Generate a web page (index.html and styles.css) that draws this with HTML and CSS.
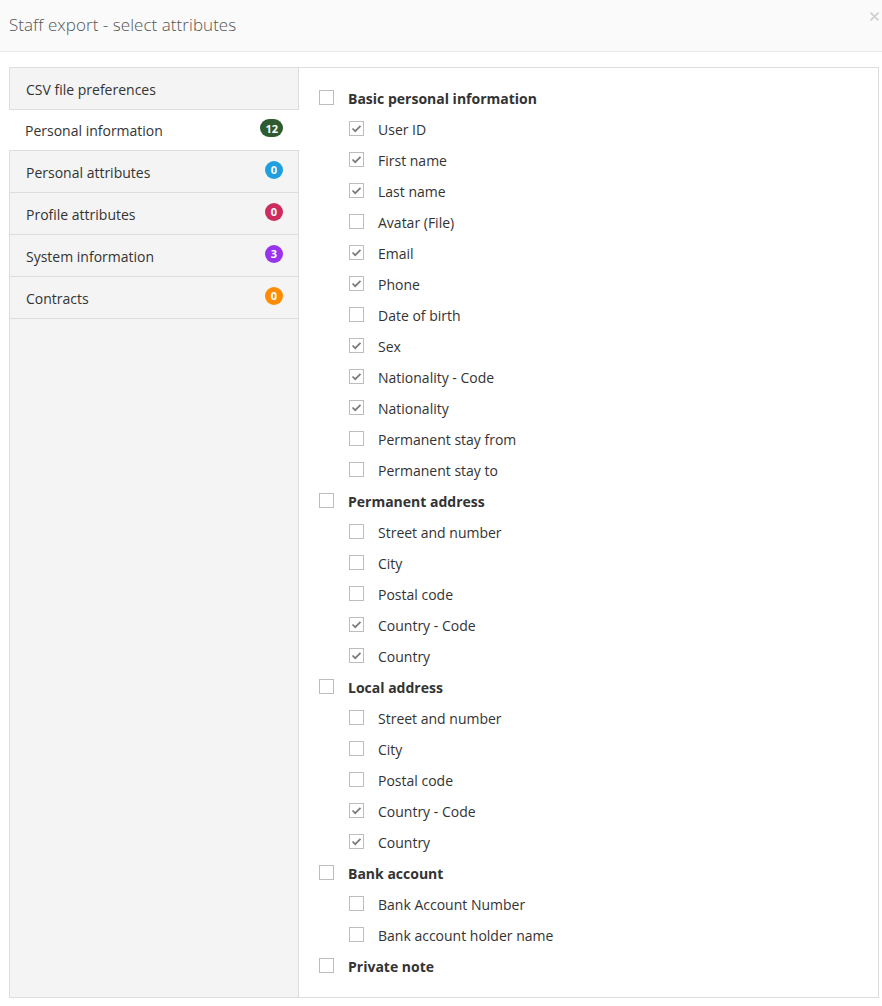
FILE: index.html
```html
<!DOCTYPE html>
<html>
<head>
<meta charset="utf-8">
<link rel="stylesheet" href="styles.css">
</head>
<body>
<div class="header">
  <div class="title">Staff export - select attributes</div>
  <div class="close"><svg viewBox="0 0 9 9" width="9" height="9"><path d="M0.5 0.5 L8.5 8.5 M8.5 0.5 L0.5 8.5" stroke="#cfcfcf" stroke-width="1.6" fill="none"/></svg></div>
</div>
<div class="main">
  <div class="panel">
    <div class="sidebar">
      <div class="tab">CSV file preferences</div>
      <div class="tab active">Personal information <span class="badge green">12</span></div>
      <div class="tab">Personal attributes <span class="badge blue">0</span></div>
      <div class="tab">Profile attributes <span class="badge red">0</span></div>
      <div class="tab">System information <span class="badge purple">3</span></div>
      <div class="tab">Contracts <span class="badge orange">0</span></div>
    </div>
    <div class="content" id="content"></div>
  </div>
</div>
<script src="app.js"></script>
</body>
</html>
```
FILE: app.js
```js
var groups = [
  ["Basic personal information", [
    ["User ID",1],["First name",1],["Last name",1],["Avatar (File)",0],["Email",1],["Phone",1],
    ["Date of birth",0],["Sex",1],["Nationality - Code",1],["Nationality",1],
    ["Permanent stay from",0],["Permanent stay to",0]]],
  ["Permanent address", [["Street and number",0],["City",0],["Postal code",0],["Country - Code",1],["Country",1]]],
  ["Local address", [["Street and number",0],["City",0],["Postal code",0],["Country - Code",1],["Country",1]]],
  ["Bank account", [["Bank Account Number",0],["Bank account holder name",0]]],
  ["Private note", []]
];
var check = '<svg viewBox="0 0 15 15" width="15" height="15"><polyline points="3.5,7.5 6.2,10.2 11.5,4.8" fill="none" stroke="#7a7a7a" stroke-width="1.7"/></svg>';
var html = '';
groups.forEach(function(g){
  html += '<div class="row top"><span class="cb"></span><span class="lbl">' + g[0] + '</span></div>';
  g[1].forEach(function(it){
    html += '<div class="row sub"><span class="cb">' + (it[1] ? check : '') + '</span><span class="lbl">' + it[0] + '</span></div>';
  });
});
document.getElementById('content').innerHTML = html;
```
FILE: styles.css
```css
* { box-sizing: border-box; }
body {
  margin: 0;
  font-family: "Open Sans", "Liberation Sans", sans-serif;
  color: #333;
  background: #fff;
}
.header {
  height: 52px;
  background: #fafafa;
  border-bottom: 1px solid #e8e8e8;
  display: flex;
  align-items: center;
  justify-content: space-between;
  padding: 0 3px 3px 9px;
}
.title {
  font-size: 17px;
  font-weight: 300;
  color: #555;
  letter-spacing: 0.05px;
}
.close {
  align-self: flex-start;
  margin-top: 12px;
  width: 9px;
  height: 9px;
  display: flex;
}
.main {
  padding: 15px 4px 0 9px;
}
.panel {
  display: flex;
  width: 870px;
  height: 931px;
  border: 1px solid #ddd;
}
.sidebar {
  width: 289px;
  flex: none;
  background: #f4f4f4;
  border-right: 1px solid #ddd;
}
.tab {
  height: 42px;
  border-bottom: 1px solid #ddd;
  display: flex;
  align-items: center;
  justify-content: space-between;
  padding: 1px 15px 0 16px;
  font-size: 14px;
  color: #333;
}
.tab.active {
  background: #fff;
  margin-right: -1px;
  margin-left: -1px;
  padding-left: 16px;
  padding-right: 16px;
  height: 41px;
}
.badge {
  min-width: 18px;
  height: 18px;
  border-radius: 9px;
  padding: 0 5px;
  color: #fff;
  font-size: 11px;
  font-weight: 700;
  display: flex;
  align-items: center;
  justify-content: center;
  line-height: 1;
  margin-bottom: 5px;
}
.green { background: #2e5b30; }
.blue { background: #1f9fde; }
.red { background: #cc2d5e; }
.purple { background: #9933ee; }
.orange { background: #ff8c00; }
.content {
  flex: 1;
  padding: 15px 0 0 20px;
}
.row {
  height: 31px;
  display: flex;
  align-items: center;
  font-size: 14px;
}
.row.sub { padding-left: 30px; }
.row.top .lbl { font-weight: 700; }
.cb {
  width: 15px;
  height: 15px;
  border: 1px solid #bdbdbd;
  background: #fff;
  margin-right: 14px;
  margin-bottom: 2px;
  flex: none;
  position: relative;
}
.cb svg {
  position: absolute;
  left: -1px;
  top: -1px;
}
```
